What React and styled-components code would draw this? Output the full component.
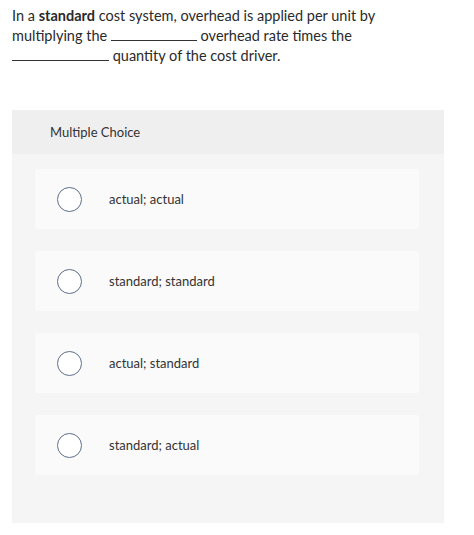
import React from "react";
import styled, { createGlobalStyle } from "styled-components";

const Global = createGlobalStyle`
  html, body { margin: 0; padding: 0; background: #ffffff; }
  body { font-family: Lato, "Open Sans", "Liberation Sans", sans-serif; color: #222; }
`;

const Page = styled.div`
  padding: 6px 0 0 12px;
  width: 432px;
`;

const Question = styled.p`
  margin: 0;
  font-size: 14.5px;
  line-height: 20px;
  color: #2a2a2a;
`;

const Blank = styled.span`
  display: inline-block;
  width: ${(p) => p.$w}px;
  height: 14px;
  border-bottom: 1px solid #333;
  vertical-align: baseline;
`;

const Panel = styled.div`
  margin-top: 44px;
  background: #f5f5f5;
  padding-bottom: 48px;
`;

const Header = styled.div`
  height: 44px;
  display: flex;
  align-items: center;
  padding-left: 38px;
  background: #efefef;
  font-size: 13px;
  color: #333;
`;

const Options = styled.div`
  display: flex;
  flex-direction: column;
  gap: 22px;
  padding: 15px 25px 0 23px;
`;

const Option = styled.label`
  height: 60px;
  display: flex;
  align-items: center;
  background: #fafafa;
  border-radius: 2px;
  padding-left: 22px;
  font-size: 13px;
  color: #333;
  cursor: pointer;
`;

const Radio = styled.span`
  width: 23px;
  height: 23px;
  border: 1.5px solid #5e6f88;
  border-radius: 50%;
  background: #fff;
  margin-right: 27px;
  flex: none;
`;

const options = [
  "actual; actual",
  "standard; standard",
  "actual; standard",
  "standard; actual",
];

export default function App() {
  return (
    <>
      <Global />
      <Page>
        <Question>
          In a <strong>standard</strong> cost system, overhead is applied per unit by
          <br />
          multiplying the <Blank $w={86} /> overhead rate times the
          <br />
          <Blank $w={97} /> quantity of the cost driver.
        </Question>
        <Panel>
          <Header>Multiple Choice</Header>
          <Options>
            {options.map((o) => (
              <Option key={o}>
                <Radio />
                {o}
              </Option>
            ))}
          </Options>
        </Panel>
      </Page>
    </>
  );
}
